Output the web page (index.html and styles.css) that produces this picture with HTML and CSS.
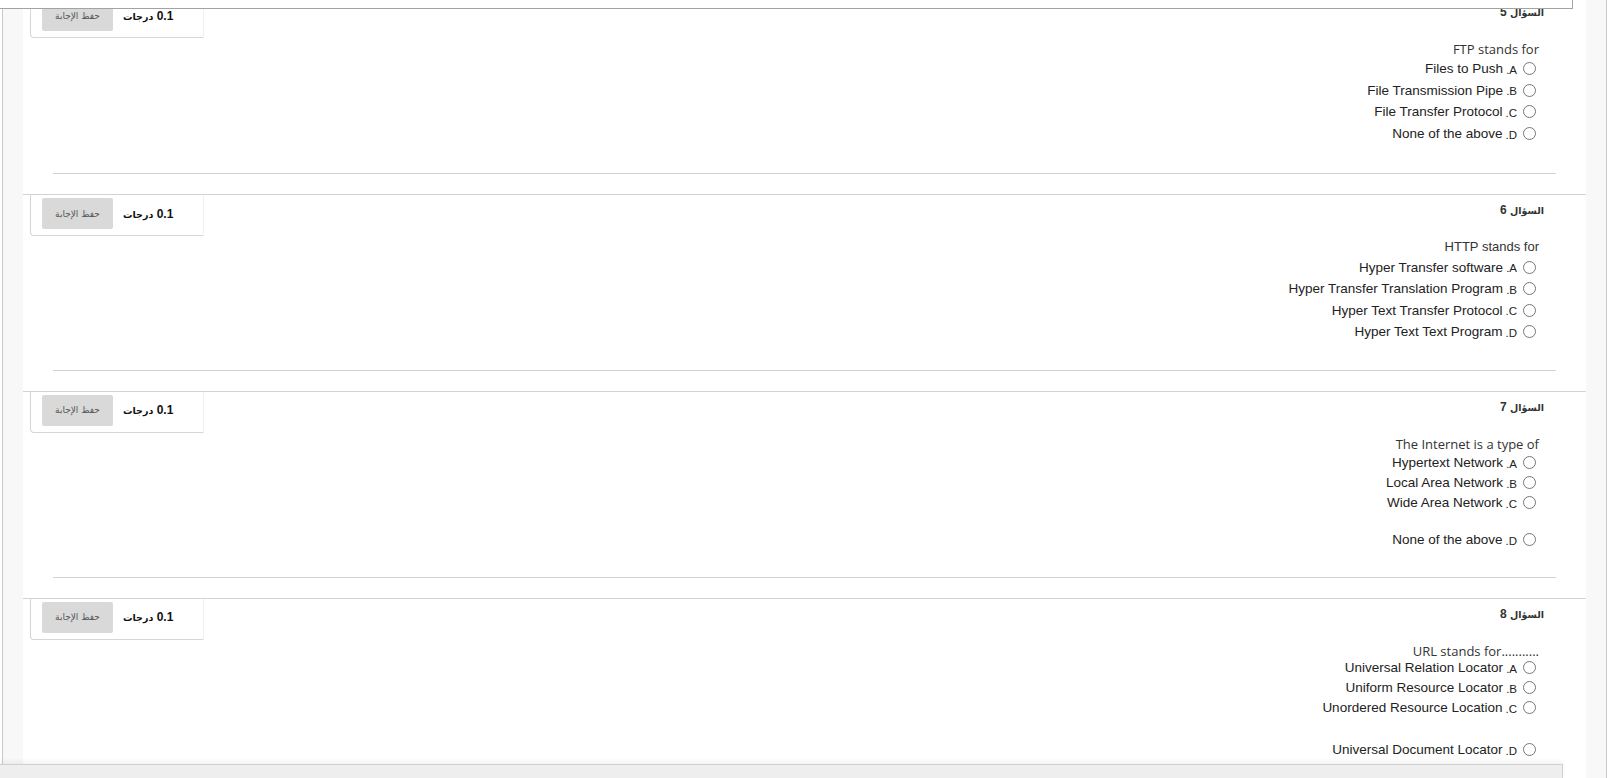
FILE: index.html
```html
<!DOCTYPE html>
<html lang="ar">
<head>
<meta charset="utf-8">
<title>اختبار</title>
<link rel="stylesheet" href="styles.css">
</head>
<body>
<div class="topbar"></div>
<div class="page">
  <div class="rail rail-l"></div>
  <main class="sheet" dir="rtl">

    <section class="q q-first">
      <div class="q-head">
        <h3 class="q-title"><span class="ar">السؤال</span> 5</h3>
        <div class="q-points">
          <span class="pts">0.1 <span class="ar">درجات</span></span>
          <button class="save" type="button">حفظ الإجابة</button>
        </div>
      </div>
      <div class="q-body">
        <p class="q-text open" dir="ltr">FTP stands for</p>
        <ul class="opts wide">
          <li class="opt"><input type="radio" name="q5"><span class="letter">A.</span><span class="ans">Files to Push</span></li>
          <li class="opt"><input type="radio" name="q5"><span class="letter">B.</span><span class="ans">File Transmission Pipe</span></li>
          <li class="opt"><input type="radio" name="q5"><span class="letter">C.</span><span class="ans">File Transfer Protocol</span></li>
          <li class="opt"><input type="radio" name="q5"><span class="letter">D.</span><span class="ans">None of the above</span></li>
        </ul>
      </div>
      <div class="q-rule"></div>
    </section>

    <section class="q">
      <div class="q-head">
        <h3 class="q-title"><span class="ar">السؤال</span> 6</h3>
        <div class="q-points">
          <span class="pts">0.1 <span class="ar">درجات</span></span>
          <button class="save" type="button">حفظ الإجابة</button>
        </div>
      </div>
      <div class="q-body">
        <p class="q-text arial" dir="ltr">HTTP stands for</p>
        <ul class="opts wide">
          <li class="opt"><input type="radio" name="q6"><span class="letter">A.</span><span class="ans">Hyper Transfer software</span></li>
          <li class="opt"><input type="radio" name="q6"><span class="letter">B.</span><span class="ans">Hyper Transfer Translation Program</span></li>
          <li class="opt"><input type="radio" name="q6"><span class="letter">C.</span><span class="ans">Hyper Text Transfer Protocol</span></li>
          <li class="opt"><input type="radio" name="q6"><span class="letter">D.</span><span class="ans">Hyper Text Text Program</span></li>
        </ul>
      </div>
      <div class="q-rule"></div>
    </section>

    <section class="q q-tight">
      <div class="q-head">
        <h3 class="q-title"><span class="ar">السؤال</span> 7</h3>
        <div class="q-points">
          <span class="pts">0.1 <span class="ar">درجات</span></span>
          <button class="save" type="button">حفظ الإجابة</button>
        </div>
      </div>
      <div class="q-body">
        <p class="q-text open" dir="ltr">The Internet is a type of</p>
        <ul class="opts tight">
          <li class="opt"><input type="radio" name="q7"><span class="letter">A.</span><span class="ans">Hypertext Network</span></li>
          <li class="opt"><input type="radio" name="q7"><span class="letter">B.</span><span class="ans">Local Area Network</span></li>
          <li class="opt"><input type="radio" name="q7"><span class="letter">C.</span><span class="ans">Wide Area Network</span></li>
          <li class="opt gap-s"><input type="radio" name="q7"><span class="letter">D.</span><span class="ans">None of the above</span></li>
        </ul>
      </div>
      <div class="q-rule"></div>
    </section>

    <section class="q q-tight">
      <div class="q-head">
        <h3 class="q-title"><span class="ar">السؤال</span> 8</h3>
        <div class="q-points">
          <span class="pts">0.1 <span class="ar">درجات</span></span>
          <button class="save" type="button">حفظ الإجابة</button>
        </div>
      </div>
      <div class="q-body">
        <p class="q-text open" dir="ltr">URL stands for...........</p>
        <ul class="opts tight lift">
          <li class="opt"><input type="radio" name="q8"><span class="letter">A.</span><span class="ans">Universal Relation Locator</span></li>
          <li class="opt"><input type="radio" name="q8"><span class="letter">B.</span><span class="ans">Uniform Resource Locator</span></li>
          <li class="opt"><input type="radio" name="q8"><span class="letter">C.</span><span class="ans">Unordered Resource Location</span></li>
          <li class="opt gap-l"><input type="radio" name="q8"><span class="letter">D.</span><span class="ans">Universal Document Locator</span></li>
        </ul>
      </div>
      <div class="q-rule"></div>
    </section>

  </main>
  <div class="rail rail-r"></div>
</div>
<div class="bottombar"></div>
</body>
</html>
```
FILE: styles.css
```css
html, body {
  margin: 0;
  padding: 0;
  height: 100%;
  overflow: hidden;
  background: #ffffff;
  font-family: "Liberation Sans", "DejaVu Sans", Arial, sans-serif;
}

.topbar {
  position: fixed;
  top: 0;
  left: 0;
  width: 1572px;
  height: 8px;
  background: #ffffff;
  border-bottom: 1px solid #a3a3a3;
  border-right: 1px solid #a3a3a3;
  z-index: 5;
}

.bottombar {
  position: fixed;
  left: 0;
  bottom: 0;
  width: 1562px;
  height: 13px;
  background: #eeeeee;
  border-top: 1px solid #d0d0d0;
  border-right: 1px solid #d0d0d0;
  box-shadow: 0 -3px 4px rgba(0, 0, 0, 0.05);
  z-index: 5;
}

.page {
  display: flex;
  min-height: 100vh;
}

.rail {
  width: 20px;
  flex: 0 0 20px;
  background: #f8f8f8;
}

.rail-l {
  margin-left: 2px;
  border-left: 1px solid #c9c9c9;
}

.rail-r {
  margin-right: 8px;
  border-right: 1px solid #c9c9c9;
}

.sheet {
  flex: 1 1 auto;
  background: #ffffff;
  min-width: 0;
}

.q {
  border-top: 1px solid #d3d3d3;
}

.q-first {
  margin-top: -4px;
}

.q-head {
  display: flex;
  justify-content: space-between;
  align-items: flex-start;
}

.q-title {
  margin: 0 42px 0 0;
  padding-top: 8px;
  font-size: 12px;
  line-height: 14px;
  font-weight: bold;
  color: #333333;
}

.q-title .ar {
  font-size: 9.5px;
  font-family: "DejaVu Sans", sans-serif;
}

.q-points {
  display: flex;
  align-items: center;
  gap: 10px;
  margin-left: 7px;
  padding: 3px 30px 6px 11px;
  border-left: 1px solid #d6d6d6;
  border-bottom: 1px solid #d6d6d6;
  border-right: 1px solid #f1f1f1;
  border-bottom-left-radius: 4px;
}

.pts {
  font-size: 12px;
  font-weight: bold;
  color: #111111;
  white-space: nowrap;
}

.pts .ar {
  font-size: 9.5px;
  font-family: "DejaVu Sans", sans-serif;
}

.save {
  width: 71px;
  height: 31px;
  padding: 0;
  border: none;
  border-radius: 2px;
  background: #d9d9d9;
  color: #555555;
  font-family: "DejaVu Sans", sans-serif;
  font-size: 9px;
}

.q-body {
  padding: 2px 0 27px 0;
}

.q-first .q-body {
  padding-bottom: 29px;
}

.q-text {
  margin: 0 47px 0 0;
  text-align: right;
  font-size: 13px;
  line-height: 18px;
  color: #333333;
}

.q-text.open {
  font-family: "Open Sans", "Liberation Sans", sans-serif;
}

.q-text.arial {
  font-family: "Liberation Sans", Arial, sans-serif;
}

.opts {
  list-style: none;
  margin: 0 50px 0 0;
  padding: 0;
}

.opts.lift {
  margin-top: -2px;
}

.opt {
  display: flex;
  align-items: center;
  font-size: 13.5px;
  color: #222222;
}

.opts.wide .opt {
  height: 21.6px;
}

.opts.tight .opt {
  height: 20px;
}

.opt.gap-s {
  margin-top: 17px;
}

.opt.gap-l {
  margin-top: 22px;
}

.opt input {
  appearance: none;
  -webkit-appearance: none;
  width: 13px;
  height: 13px;
  margin: 0 0 0 6px;
  border: 1px solid #767676;
  border-radius: 50%;
  background: #ffffff;
  flex: 0 0 13px;
}

.letter {
  font-size: 11.5px;
  margin: 2px 0 0 3px;
  color: #222222;
}

.ans {
  white-space: nowrap;
}

.q-rule {
  margin: 0 30px 20px 30px;
  border-top: 1px solid #d3d3d3;
}
```
